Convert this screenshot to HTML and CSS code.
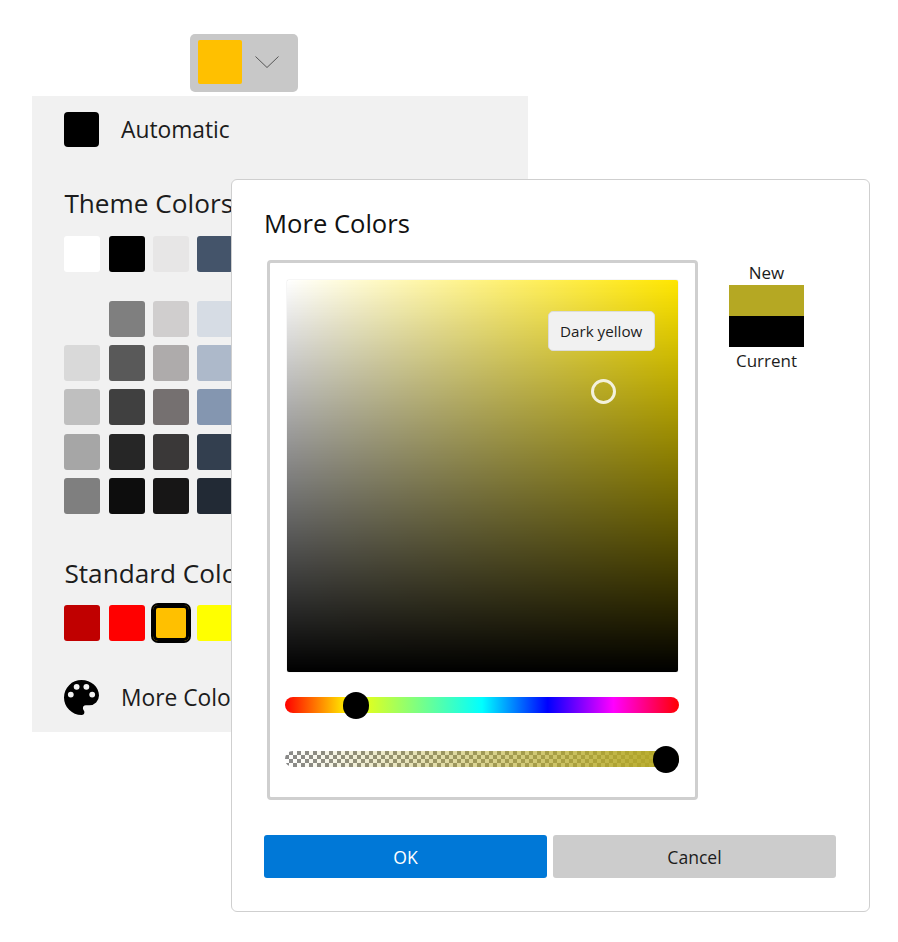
FILE: index.html
```html
<!DOCTYPE html>
<html lang="en">
<head>
<meta charset="utf-8">
<title>More Colors</title>
<link rel="stylesheet" href="styles.css">
</head>
<body>
<div class="page">
  <div class="picker-btn">
    <span class="picker-color"></span>
    <svg class="chevron" viewBox="0 0 24 12" width="24" height="12"><path d="M0.5 0.5 L12 11.5 L23.5 0.5" fill="none" stroke="#555" stroke-width="1"/></svg>
  </div>
  <div class="panel">
    <div class="row-item auto">
      <span class="auto-swatch"></span>
      <span class="item-label">Automatic</span>
    </div>
    <div class="heading theme-heading">Theme Colors</div>
    <div class="grid top-row">
      <span class="sw c-fff"></span><span class="sw c-000"></span><span class="sw c-e7"></span><span class="sw c-44"></span>
    </div>
    <div class="grid shades">
      <span class="sw c-f2"></span><span class="sw c-7f"></span><span class="sw c-d0"></span><span class="sw c-d6"></span>
      <span class="sw c-d9"></span><span class="sw c-59"></span><span class="sw c-ae"></span><span class="sw c-ad"></span>
      <span class="sw c-bf"></span><span class="sw c-40"></span><span class="sw c-75"></span><span class="sw c-84"></span>
      <span class="sw c-a6"></span><span class="sw c-26"></span><span class="sw c-3a"></span><span class="sw c-33"></span>
      <span class="sw c-7f"></span><span class="sw c-0d"></span><span class="sw c-17"></span><span class="sw c-22"></span>
    </div>
    <div class="heading standard-heading">Standard Colors</div>
    <div class="grid standard">
      <span class="sw c-c0"></span><span class="sw c-ff0"></span><span class="sw c-ffc selected"></span><span class="sw c-yel"></span>
    </div>
    <div class="row-item more">
      <svg class="palette" viewBox="3 3 18 18" width="35" height="35"><path d="M17.5,12A1.5,1.5 0 0,1 16,10.5A1.5,1.5 0 0,1 17.5,9A1.5,1.5 0 0,1 19,10.5A1.5,1.5 0 0,1 17.5,12M14.5,8A1.5,1.5 0 0,1 13,6.5A1.5,1.5 0 0,1 14.5,5A1.5,1.5 0 0,1 16,6.5A1.5,1.5 0 0,1 14.5,8M9.5,8A1.5,1.5 0 0,1 8,6.5A1.5,1.5 0 0,1 9.5,5A1.5,1.5 0 0,1 11,6.5A1.5,1.5 0 0,1 9.5,8M6.5,12A1.5,1.5 0 0,1 5,10.5A1.5,1.5 0 0,1 6.5,9A1.5,1.5 0 0,1 8,10.5A1.5,1.5 0 0,1 6.5,12M12,3A9,9 0 0,0 3,12A9,9 0 0,0 12,21A1.5,1.5 0 0,0 13.5,19.5C13.5,19.11 13.35,18.76 13.11,18.5C12.88,18.23 12.73,17.88 12.73,17.5A1.5,1.5 0 0,1 14.23,16H16A5,5 0 0,0 21,11C21,6.58 16.97,3 12,3Z"/></svg>
      <span class="item-label">More Colors...</span>
    </div>
  </div>

  <div class="dialog">
    <div class="dialog-title">More Colors</div>
    <div class="dialog-body">
      <div class="editor">
        <div class="spectrum">
          <span class="cursor"></span>
          <span class="tooltip">Dark yellow</span>
        </div>
        <div class="slider hue"><span class="thumb hue-thumb"></span></div>
        <div class="slider alpha"><span class="thumb alpha-thumb"></span></div>
      </div>
      <div class="compare">
        <span class="compare-label">New</span>
        <span class="compare-new"></span>
        <span class="compare-cur"></span>
        <span class="compare-label compare-label-low">Current</span>
      </div>
    </div>
    <div class="actions">
      <div class="btn btn-ok">OK</div>
      <div class="btn btn-cancel">Cancel</div>
    </div>
  </div>
</div>
</body>
</html>
```
FILE: styles.css
```css
html, body { margin: 0; padding: 0; background: #fff; }
body { font-family: "Open Sans", "Noto Sans", "Liberation Sans", sans-serif; color: #1c1c1c; }
.page { position: relative; width: 898px; height: 942px; overflow: hidden; padding-top: 34px; box-sizing: border-box; }

.picker-btn { width: 108px; height: 58px; margin-left: 190px; box-sizing: border-box; padding: 6px 0 8px 8px; background: #c8c8c8; border-radius: 5px; display: flex; align-items: center; gap: 13px; }
.picker-color { width: 44px; height: 44px; background: #ffc000; border-radius: 2px; flex: none; }
.chevron { flex: none; }

.panel { width: 496px; height: 636px; margin: 4px 0 0 32px; box-sizing: border-box; padding: 16px 0 0 32.4px; background: #f1f1f1; }
.row-item { display: flex; align-items: center; height: 35px; }
.auto-swatch { width: 35px; height: 35px; background: #000; border-radius: 4px; flex: none; }
.palette { flex: none; }
.item-label { margin-left: 21.6px; font-size: 22.8px; white-space: nowrap; }
.heading { font-size: 26.2px; line-height: 36px; white-space: nowrap; }
.theme-heading { margin-top: 38px; }
.standard-heading { margin-top: 41px; }
.grid { display: grid; grid-template-columns: repeat(4, 36px); column-gap: 8.33px; row-gap: 8.33px; }
.top-row { margin-top: 15px; }
.shades { margin-top: 28.7px; }
.standard { margin-top: 14px; }
.more { margin-top: 39px; }
.sw { height: 36px; border-radius: 3px; display: block; }
.selected { box-shadow: 0 0 0 2px #000, inset 0 0 0 3px #000; border-radius: 5px; }

.c-fff { background: #fff; } .c-000 { background: #000; } .c-e7 { background: #e7e6e6; } .c-44 { background: #44546a; }
.c-f2 { background: #f1f1f1; } .c-7f { background: #7f7f7f; } .c-d0 { background: #d0cece; } .c-d6 { background: #d6dce4; }
.c-d9 { background: #d9d9d9; } .c-59 { background: #595959; } .c-ae { background: #aeabab; } .c-ad { background: #adb9ca; }
.c-bf { background: #bfbfbf; } .c-40 { background: #404040; } .c-75 { background: #757070; } .c-84 { background: #8496b0; }
.c-a6 { background: #a6a6a6; } .c-26 { background: #262626; } .c-3a { background: #3a3838; } .c-33 { background: #333f4f; }
.c-0d { background: #0d0d0d; } .c-17 { background: #171616; } .c-22 { background: #222a35; }
.c-c0 { background: #c00000; } .c-ff0 { background: #ff0000; } .c-ffc { background: #ffc000; } .c-yel { background: #ffff00; }

.dialog { position: absolute; left: 231px; top: 179px; width: 639px; height: 733px; box-sizing: border-box; padding: 0 33px 0 32px; background: #fff; border: 1px solid #cfcfcf; border-radius: 6px; }
.dialog-title { height: 80px; font-size: 25.6px; line-height: 88px; color: #111; }
.dialog-body { display: flex; align-items: flex-start; margin-left: 3px; }
.editor { position: relative; width: 431px; height: 540px; box-sizing: border-box; padding: 16.5px 0 0 16.7px; border: 3px solid #cfcfcf; border-radius: 4px; flex: none; }
.spectrum { position: relative; width: 391.6px; height: 392px; border-radius: 2px; box-shadow: 0 0 1px rgba(0,0,0,.35); background: linear-gradient(to top, #000, rgba(0,0,0,0)), linear-gradient(to right, #fff, #ffe600); }
.cursor { position: absolute; left: 304px; top: 99.5px; width: 25px; height: 25px; box-sizing: border-box; border: 3px solid #f3f1dc; border-radius: 50%; }
.tooltip { position: absolute; left: 261px; top: 31px; width: 107px; height: 40px; box-sizing: border-box; display: flex; align-items: center; justify-content: center; background: #f1f1f1; border: 1px solid #dcdcdc; border-radius: 5px; font-size: 15.2px; white-space: nowrap; }
.slider { position: relative; width: 394px; height: 16px; margin-left: -1.4px; border-radius: 8px; }
.hue { margin-top: 25.5px; background: linear-gradient(to right, #f00 0%, #ff0 16.67%, #0ff 50%, #00f 66.67%, #f0f 83.33%, #f00 100%); }
.alpha { margin-top: 38px; background: linear-gradient(to right, rgba(181,168,35,0), #b5a823), repeating-conic-gradient(#8a8a8a 0 25%, #fff 0 50%) 0 0 / 8px 8px; }
.thumb { position: absolute; width: 26.5px; height: 26.5px; top: -5px; background: #000; border-radius: 50%; }
.hue-thumb { left: 57.5px; }
.alpha-thumb { left: 367.5px; }
.compare { display: flex; flex-direction: column; align-items: center; width: 75px; margin: 1px 0 0 31px; }
.compare-label { font-size: 17px; line-height: 24px; white-space: nowrap; }
.compare-label-low { margin-top: 2px; }
.compare-new { width: 75px; height: 31px; background: #b5a823; }
.compare-cur { width: 75px; height: 31px; background: #000; }
.actions { display: flex; gap: 6px; margin-top: 35px; }
.btn { width: 283px; height: 43px; display: flex; align-items: center; justify-content: center; font-size: 17.6px; border-radius: 3px; }
.btn-ok { background: #0078d7; color: #fff; }
.btn-cancel { background: #cccccc; color: #1c1c1c; }
```
